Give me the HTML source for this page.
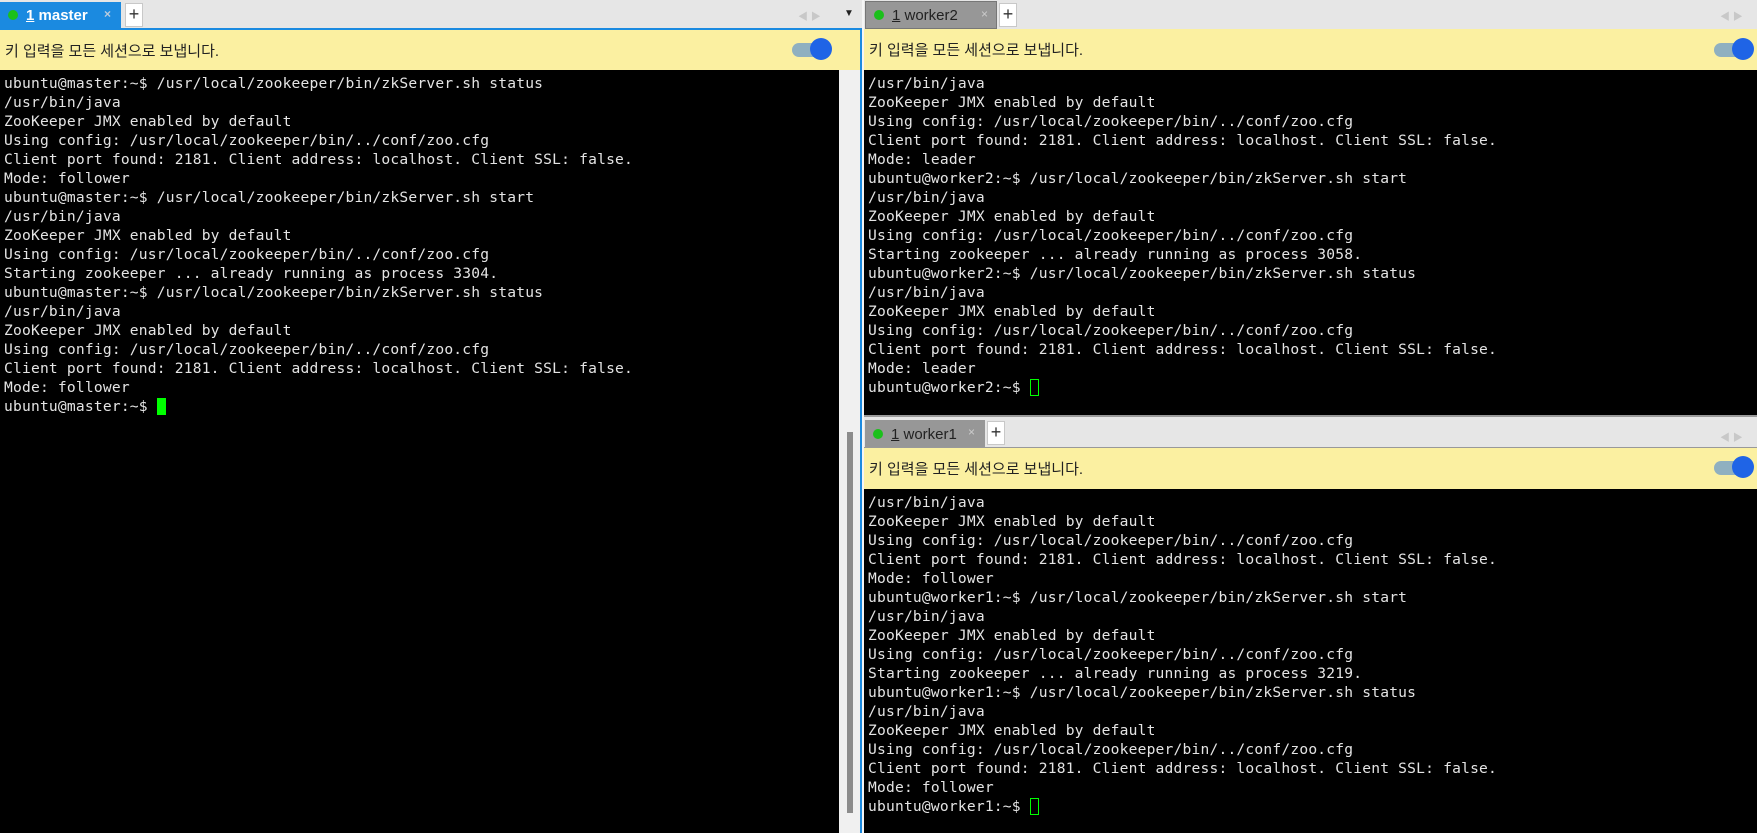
<!DOCTYPE html>
<html><head><meta charset="utf-8"><style>
*{margin:0;padding:0;box-sizing:border-box}
body{width:1757px;height:833px;background:#e6e6e6;position:relative;overflow:hidden;font-family:"Liberation Sans","Noto Sans CJK KR",sans-serif}
.abs{position:absolute}
.term{position:absolute;background:#000;color:#e4e4e4;font-family:"DejaVu Sans Mono","Liberation Mono",monospace;font-size:14.6px;letter-spacing:0.2px;line-height:19px;white-space:pre;padding-left:4px}
.yb{position:absolute;background:#fbf0a1;font-size:15px;color:#222;padding-left:5px;display:flex;align-items:center}
.tog{position:absolute;width:38px;height:14px;border-radius:7px;background:#8fb0c0}
.tog i{position:absolute;right:-2px;top:-5px;width:22px;height:22px;border-radius:50%;background:#1f64e6}
.tab{position:absolute;height:28px;display:flex;align-items:center;font-size:15px}
.dot{width:10px;height:10px;border-radius:50%;background:#1bc01b;margin:0 8px 0 8px}
.plus{position:absolute;width:18px;height:24px;background:#fff;border:1px solid #c8c8c8;font-size:18px;line-height:20px;text-align:center;color:#333}
.x{font-size:12px;color:#ccc;position:absolute}
.arr{position:absolute;color:#c8c8c8;font-size:10px}
</style></head><body>
<!-- left pane -->
<div class="tab" style="left:0;top:2px;width:121px;height:26px;background:#1b8ae0;color:#fff;font-weight:bold"><span class="dot"></span><u>1</u>&nbsp;master<span class="x" style="left:104px;top:5px;color:#bcd">×</span></div>
<div class="plus" style="left:125px;top:3px">+</div>
<div class="arr" style="left:798px;top:8px">◀ ▶</div>
<div class="arr" style="left:844px;top:8px;color:#222">▼</div>
<div class="abs" style="left:0;top:28px;width:864px;height:2px;background:#1b8ae0"></div>
<div class="yb" style="left:0;top:30px;width:860px;height:40px">키 입력을 모든 세션으로 보냅니다.</div>
<div class="tog" style="left:792px;top:43px"><i></i></div>
<div class="term" style="left:0;top:70px;width:839px;height:763px;padding-top:4px">ubuntu@master:~$ /usr/local/zookeeper/bin/zkServer.sh status
/usr/bin/java
ZooKeeper JMX enabled by default
Using config: /usr/local/zookeeper/bin/../conf/zoo.cfg
Client port found: 2181. Client address: localhost. Client SSL: false.
Mode: follower
ubuntu@master:~$ /usr/local/zookeeper/bin/zkServer.sh start
/usr/bin/java
ZooKeeper JMX enabled by default
Using config: /usr/local/zookeeper/bin/../conf/zoo.cfg
Starting zookeeper ... already running as process 3304.
ubuntu@master:~$ /usr/local/zookeeper/bin/zkServer.sh status
/usr/bin/java
ZooKeeper JMX enabled by default
Using config: /usr/local/zookeeper/bin/../conf/zoo.cfg
Client port found: 2181. Client address: localhost. Client SSL: false.
Mode: follower
ubuntu@master:~$ <span style="display:inline-block;width:9px;height:17px;background:#00ff00;vertical-align:-4px"></span></div>
<div class="abs" style="left:839px;top:70px;width:21px;height:763px;background:#f0f0f0"></div>
<div class="abs" style="left:847px;top:432px;width:6px;height:381px;background:#8c8c8c"></div>
<div class="abs" style="left:860px;top:28px;width:2px;height:805px;background:#1b8ae0"></div>
<div class="abs" style="left:862px;top:0;width:2px;height:833px;background:#f5f5f5"></div>
<!-- right top -->
<div class="tab" style="left:865px;top:1px;width:132px;height:28px;background:#979797;color:#222;border:1px solid #777"><span class="dot"></span><u>1</u>&nbsp;worker2<span class="x" style="left:115px;top:5px">×</span></div>
<div class="plus" style="left:999px;top:3px">+</div>
<div class="arr" style="left:1720px;top:8px">◀ ▶</div>
<div class="yb" style="left:864px;top:29px;width:893px;height:41px">키 입력을 모든 세션으로 보냅니다.</div>
<div class="tog" style="left:1714px;top:43px"><i></i></div>
<div class="term" style="left:864px;top:70px;width:893px;height:345px;padding-top:4px">/usr/bin/java
ZooKeeper JMX enabled by default
Using config: /usr/local/zookeeper/bin/../conf/zoo.cfg
Client port found: 2181. Client address: localhost. Client SSL: false.
Mode: leader
ubuntu@worker2:~$ /usr/local/zookeeper/bin/zkServer.sh start
/usr/bin/java
ZooKeeper JMX enabled by default
Using config: /usr/local/zookeeper/bin/../conf/zoo.cfg
Starting zookeeper ... already running as process 3058.
ubuntu@worker2:~$ /usr/local/zookeeper/bin/zkServer.sh status
/usr/bin/java
ZooKeeper JMX enabled by default
Using config: /usr/local/zookeeper/bin/../conf/zoo.cfg
Client port found: 2181. Client address: localhost. Client SSL: false.
Mode: leader
ubuntu@worker2:~$ <span style="display:inline-block;width:9px;height:17px;border:1px solid #00ff00;vertical-align:-4px"></span></div>
<div class="abs" style="left:864px;top:415px;width:893px;height:2px;background:#9a9a9a"></div>
<!-- right bottom -->
<div class="tab" style="left:865px;top:420px;width:120px;height:28px;background:#979797;color:#222"><span class="dot"></span><u>1</u>&nbsp;worker1<span class="x" style="left:103px;top:5px">×</span></div>
<div class="plus" style="left:987px;top:421px">+</div>
<div class="arr" style="left:1720px;top:429px">◀ ▶</div>
<div class="abs" style="left:864px;top:447px;width:893px;height:1px;background:#999"></div>
<div class="yb" style="left:864px;top:448px;width:893px;height:41px">키 입력을 모든 세션으로 보냅니다.</div>
<div class="tog" style="left:1714px;top:461px"><i></i></div>
<div class="term" style="left:864px;top:489px;width:893px;height:344px;padding-top:4px">/usr/bin/java
ZooKeeper JMX enabled by default
Using config: /usr/local/zookeeper/bin/../conf/zoo.cfg
Client port found: 2181. Client address: localhost. Client SSL: false.
Mode: follower
ubuntu@worker1:~$ /usr/local/zookeeper/bin/zkServer.sh start
/usr/bin/java
ZooKeeper JMX enabled by default
Using config: /usr/local/zookeeper/bin/../conf/zoo.cfg
Starting zookeeper ... already running as process 3219.
ubuntu@worker1:~$ /usr/local/zookeeper/bin/zkServer.sh status
/usr/bin/java
ZooKeeper JMX enabled by default
Using config: /usr/local/zookeeper/bin/../conf/zoo.cfg
Client port found: 2181. Client address: localhost. Client SSL: false.
Mode: follower
ubuntu@worker1:~$ <span style="display:inline-block;width:9px;height:17px;border:1px solid #00ff00;vertical-align:-4px"></span></div>
</body></html>
